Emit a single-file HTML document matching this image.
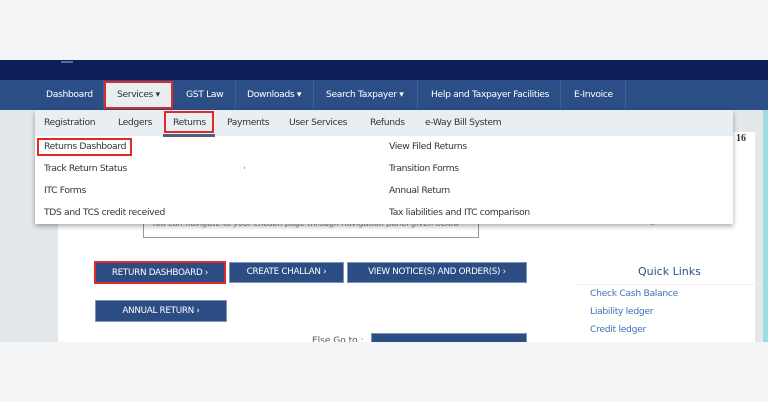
<!DOCTYPE html>
<html><head><meta charset="utf-8"><style>
*{margin:0;padding:0;box-sizing:border-box}
body{width:768px;height:402px;overflow:hidden;background:#f4f5f7;font-family:"DejaVu Sans","Liberation Sans",sans-serif;position:relative}
.a{position:absolute}
.t{font-size:9.2px;white-space:nowrap;letter-spacing:-0.35px}
.nav .t{color:#fff;top:89px}
.dd .t{color:#333}
.btn{position:absolute;background:#2c4c84;color:#fff;font-size:8.8px;text-align:center;border:1px solid #7f95b8;letter-spacing:-0.3px;white-space:nowrap}
.ql{color:#3f73b5;font-size:9.2px;letter-spacing:-0.3px}
</style></head><body>
<div class="a" style="left:0;top:60px;width:768px;height:20px;background:#0c1f57"></div>
<div class="a" style="left:0;top:80px;width:768px;height:30px;background:#2c4e86"></div>
<div class="a" style="left:61px;top:61px;width:12px;height:2px;background:#5a6990"></div>
<div class="nav">
<div class="a" style="left:103px;top:80px;width:1px;height:30px;background:#3f5f94"></div>
<div class="a" style="left:104px;top:81px;width:69px;height:28px;background:#e9eef1;border:2px solid #e02a2a"></div>
<div class="a" style="left:235px;top:80px;width:1px;height:30px;background:#3f5f94"></div>
<div class="a" style="left:313px;top:80px;width:1px;height:30px;background:#3f5f94"></div>
<div class="a" style="left:417px;top:80px;width:1px;height:30px;background:#3f5f94"></div>
<div class="a" style="left:560px;top:80px;width:1px;height:30px;background:#3f5f94"></div>
<div class="a" style="left:625px;top:80px;width:1px;height:30px;background:#3f5f94"></div>
<div class="a t" style="left:46px">Dashboard</div>
<div class="a t" style="left:117px;color:#333">Services ▾</div>
<div class="a t" style="left:186px">GST Law</div>
<div class="a t" style="left:247px">Downloads ▾</div>
<div class="a t" style="left:326px">Search Taxpayer ▾</div>
<div class="a t" style="left:431px">Help and Taxpayer Facilities</div>
<div class="a t" style="left:574px">E-Invoice</div>
</div>
<div class="a" style="left:0;top:110px;width:768px;height:232px;background:#e4e8eb"></div>
<div class="a" style="left:763px;top:110px;width:5px;height:232px;background:#9fdbe0"></div>
<div class="a" style="left:58px;top:132px;width:697px;height:210px;background:#fff"></div>
<div class="a" style="left:736px;top:133px;font:bold 10px 'Liberation Serif',serif;color:#333">16</div>
<div class="a" style="left:143px;top:215px;width:336px;height:23px;border:1px solid #999;border-top:none"></div>
<div class="a" style="left:152px;top:219px;font-size:8px;font-style:italic;color:#888;white-space:nowrap">You can navigate to your chosen page through navigation panel given below</div>
<div class="a" style="left:600px;top:217px;font-size:8px;color:#8aa;white-space:nowrap">View Profile ◉</div>
<div class="dd">
<div class="a" style="left:35px;top:110px;width:698px;height:114px;background:#fff;box-shadow:0 2px 5px rgba(0,0,0,.35)"></div>
<div class="a" style="left:35px;top:110px;width:698px;height:26px;background:#e8eef1"></div>
<div class="a" style="left:164px;top:111px;width:50px;height:22px;border:2px solid #e02a2a"></div>
<div class="a" style="left:163px;top:134px;width:52px;height:3px;background:#4e5f80"></div>
<div class="a t" style="left:44px;top:117px">Registration</div>
<div class="a t" style="left:118px;top:117px">Ledgers</div>
<div class="a t" style="left:173px;top:117px">Returns</div>
<div class="a t" style="left:227px;top:117px">Payments</div>
<div class="a t" style="left:289px;top:117px">User Services</div>
<div class="a t" style="left:370px;top:117px">Refunds</div>
<div class="a t" style="left:425px;top:117px">e-Way Bill System</div>
<div class="a" style="left:37px;top:138px;width:95px;height:18px;border:2px solid #e02a2a"></div>
<div class="a t" style="left:44px;top:141px">Returns Dashboard</div>
<div class="a t" style="left:44px;top:163px">Track Return Status</div>
<div class="a t" style="left:44px;top:185px">ITC Forms</div>
<div class="a t" style="left:44px;top:207px">TDS and TCS credit received</div>
<div class="a t" style="left:389px;top:141px">View Filed Returns</div>
<div class="a t" style="left:389px;top:163px">Transition Forms</div>
<div class="a t" style="left:389px;top:185px">Annual Return</div>
<div class="a t" style="left:389px;top:207px">Tax liabilities and ITC comparison</div>
<div class="a t" style="left:243px;top:163px">·</div>
</div>
<div class="btn" style="left:94px;top:261px;width:132px;height:23px;line-height:20px;border:2px solid #e02a2a">RETURN DASHBOARD ›</div>
<div class="btn" style="left:229px;top:262px;width:115px;height:21px;line-height:19px">CREATE CHALLAN ›</div>
<div class="btn" style="left:347px;top:262px;width:180px;height:21px;line-height:19px">VIEW NOTICE(S) AND ORDER(S) ›</div>
<div class="btn" style="left:95px;top:300px;width:132px;height:22px;line-height:20px">ANNUAL RETURN ›</div>
<div class="btn" style="left:371px;top:333px;width:156px;height:12px"></div>
<div class="a" style="left:312px;top:336px;font-size:9px;color:#555">Else Go to :</div>
<div class="a" style="left:638px;top:265px;font-size:11px;color:#2c4e86">Quick Links</div>
<div class="a" style="left:576px;top:284px;width:185px;height:1px;background:#eee"></div>
<div class="a ql" style="left:590px;top:288px">Check Cash Balance</div>
<div class="a ql" style="left:590px;top:306px">Liability ledger</div>
<div class="a ql" style="left:590px;top:324px">Credit ledger</div>
<div class="a" style="left:0;top:342px;width:768px;height:60px;background:#f4f5f7"></div>
</body></html>
